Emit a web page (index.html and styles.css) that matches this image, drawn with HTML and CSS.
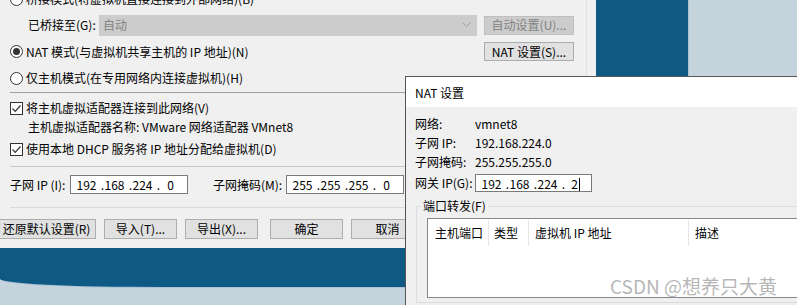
FILE: index.html
```html
<!DOCTYPE html>
<html lang="zh-CN">
<head>
<meta charset="utf-8">
<title>虚拟网络编辑器 - NAT 设置</title>
<link rel="stylesheet" href="styles.css">
</head>
<body>
<div class="desktop">
  <div class="vmware-bg"></div>

  <div class="win vne">
    <div class="vne-body">
      <div class="row row-a">
        <span class="radio"></span><span class="rtext">桥接模式(将虚拟机直接连接到外部网络)(B)</span>
      </div>
      <div class="row row-b">
        <span class="lbl-bridge">已桥接至(G):</span>
        <div class="combo">
          <span>自动</span>
          <svg class="chev" width="9" height="6" viewBox="0 0 9 6"><polyline points="0.5,0.5 4.5,4.5 8.5,0.5" fill="none" stroke="#a0a0a0" stroke-width="1"/></svg>
        </div>
        <button class="btn btn-side disabled">自动设置(U)...</button>
      </div>
      <div class="row row-c">
        <span class="radio checked"></span><span class="rtext">NAT 模式(与虚拟机共享主机的 IP 地址)(N)</span>
        <button class="btn btn-side">NAT 设置(S)...</button>
      </div>
      <div class="row row-d">
        <span class="radio"></span><span class="rtext">仅主机模式(在专用网络内连接虚拟机)(H)</span>
      </div>
      <div class="sep sep1"></div>
      <div class="row row-e">
        <span class="check"><svg width="11" height="11" viewBox="0 0 11 11"><polyline points="1.5,5.5 4.2,8.3 9.5,2.5" fill="none" stroke="#333" stroke-width="1.2"/></svg></span>
        <span class="rtext">将主机虚拟适配器连接到此网络(V)</span>
      </div>
      <div class="row row-f">主机虚拟适配器名称: VMware 网络适配器 VMnet8</div>
      <div class="row row-g">
        <span class="check"><svg width="11" height="11" viewBox="0 0 11 11"><polyline points="1.5,5.5 4.2,8.3 9.5,2.5" fill="none" stroke="#333" stroke-width="1.2"/></svg></span>
        <span class="rtext">使用本地 DHCP 服务将 IP 地址分配给虚拟机(D)</span>
      </div>
      <div class="sep sep2"></div>
      <div class="row row-h">
        <span class="lbl-ip">子网 IP (I):</span>
        <div class="ipbox">
          <span class="oct">192</span><span class="dot">.</span><span class="oct">168</span><span class="dot">.</span><span class="oct">224</span><span class="dot">.</span><span class="oct">0</span>
        </div>
        <span class="lbl-mask">子网掩码(M):</span>
        <div class="ipbox">
          <span class="oct">255</span><span class="dot">.</span><span class="oct">255</span><span class="dot">.</span><span class="oct">255</span><span class="dot">.</span><span class="oct">0</span>
        </div>
      </div>
      <div class="sep sep3"></div>
      <div class="row row-i">
        <button class="btn btn-reset">还原默认设置(R)</button>
        <button class="btn btn-std">导入(T)...</button>
        <button class="btn btn-std">导出(X)...</button>
        <button class="btn btn-std btn-ok">确定</button>
        <button class="btn btn-std">取消</button>
      </div>
    </div>
  </div>

  <div class="win nat">
    <div class="nat-title">NAT 设置</div>
    <div class="nat-body">
      <div class="kv kv1"><span class="k">网络:</span><span>vmnet8</span></div>
      <div class="kv kv2"><span class="k">子网 IP:</span><span>192.168.224.0</span></div>
      <div class="kv kv3"><span class="k">子网掩码:</span><span>255.255.255.0</span></div>
      <div class="kv kv4"><span class="k">网关 IP(G):</span>
        <div class="ipbox gw">
          <span class="oct">192</span><span class="dot">.</span><span class="oct">168</span><span class="dot">.</span><span class="oct">224</span><span class="dot">.</span><span class="oct">2<span class="caret"></span></span>
        </div>
      </div>
      <fieldset class="group">
        <legend>端口转发(F)</legend>
        <div class="list">
          <div class="list-head">
            <div class="col c1">主机端口</div>
            <div class="col c2">类型</div>
            <div class="col c3">虚拟机 IP 地址</div>
            <div class="col c4">描述</div>
          </div>
        </div>
      </fieldset>
    </div>
  </div>

  <div class="watermark">CSDN @想养只大黄</div>
</div>
</body>
</html>
```

FILE: styles.css
```css
* { box-sizing: border-box; }
html, body { margin: 0; padding: 0; }
body {
  width: 797px;
  height: 305px;
  overflow: hidden;
  font-family: "Noto Sans CJK SC", "Noto Sans", sans-serif;
  font-size: 12px;
  color: #000;
}
.desktop {
  position: relative;
  width: 797px;
  height: 305px;
  background: #c5d3dc;
  overflow: hidden;
}
.vmware-bg {
  width: 688px;
  height: 287px;
  background: #0e5a85;
  border-bottom-left-radius: 160px 8px;
  box-shadow: 1px 1px 0 #a9c3d5;
}
.win { position: absolute; }

/* ---- virtual network editor ---- */
.vne {
  left: 0;
  top: 0;
  width: 596px;
  height: 248px;
  background: #f0f0f0;
}
.vne-body {
  width: 587px;
  height: 100%;
  border-right: 1px solid #e2e2e2;
  padding: 0 12px 0 10px;
  display: flex;
  flex-direction: column;
}
.row {
  display: flex;
  align-items: center;
  flex: none;
  white-space: nowrap;
  line-height: 16px;
}
.row-a { height: 26px; margin-top: -14px; }
.row-b { height: 26px; padding-left: 18px; }
.row-c { height: 27px; }
.row-d { height: 26px; }
.row-e { height: 22px; margin-top: 4px; }
.row-f { height: 16px; padding-left: 18px; }
.row-g { height: 22px; margin-top: 3px; }
.row-h { height: 19px; margin-top: 8px; }
.row-i { height: 20px; margin-top: 11px; }

.sep { flex: none; height: 1px; }
.sep1 { margin-top: 1px; background: #a0a0a0; }
.sep2 { margin-top: 6px; background: #c8c8c8; }
.sep3 { margin-top: 13px; background: #dadada; }

.radio {
  width: 13px;
  height: 13px;
  border: 1px solid #333;
  border-radius: 50%;
  background: #fff;
  flex: none;
  display: flex;
  align-items: center;
  justify-content: center;
}
.radio.checked::after {
  content: "";
  width: 7px;
  height: 7px;
  border-radius: 50%;
  background: #333;
}
.check {
  width: 13px;
  height: 13px;
  border: 1px solid #333;
  background: #fff;
  flex: none;
  display: flex;
  align-items: center;
  justify-content: center;
}
.check svg { display: block; }
.rtext { margin-left: 3px; }

.lbl-bridge { width: 71px; flex: none; }
.combo {
  width: 378px;
  height: 21px;
  background: #cccccc;
  border: 1px solid #cccccc;
  color: #838383;
  display: flex;
  align-items: center;
  justify-content: space-between;
  padding: 0 5px 0 3px;
}
.chev { display: block; }

.btn {
  font-family: inherit;
  font-size: 12px;
  color: #000;
  background: #e1e1e1;
  border: 1px solid #adadad;
  padding: 0;
  margin: 0;
  height: 20px;
  line-height: 16px;
  text-align: center;
  white-space: nowrap;
  flex: none;
}
.btn.disabled {
  background: #cccccc;
  border-color: #bfbfbf;
  color: #838383;
}
.btn-side { width: 90px; height: 19px; margin-left: auto; }
.btn-reset { width: 99px; margin-left: -13px; }
.btn-std { width: 73px; margin-left: 8px; }
.btn-ok { margin-left: 12px; }

.lbl-ip { width: 60px; flex: none; }
.lbl-mask { width: 73px; margin-left: 25px; flex: none; }
.ipbox {
  width: 118px;
  height: 19px;
  background: #fff;
  border: 1px solid #7a7a7a;
  display: flex;
  align-items: center;
  padding-left: 4px;
  flex: none;
  line-height: 15px;
}
.oct { width: 23px; text-align: center; flex: none; white-space: nowrap; }
.dot { width: 6px; text-align: right; flex: none; margin-right: -1px; }

/* ---- NAT dialog ---- */
.nat {
  left: 405px;
  top: 76px;
  width: 400px;
  height: 240px;
  border: 1px solid #555;
  background: #f0f0f0;
}
.nat-title {
  height: 30px;
  background: #fff;
  padding-left: 9px;
  display: flex;
  align-items: center;
}
.nat-body {
  padding-left: 9px;
  display: flex;
  flex-direction: column;
}
.kv {
  display: flex;
  align-items: center;
  white-space: nowrap;
  line-height: 16px;
  flex: none;
}
.kv .k { width: 60px; flex: none; }
.kv1 { height: 18px; margin-top: 8px; }
.kv2 { height: 19px; }
.kv3 { height: 19px; }
.kv4 { height: 18px; margin-top: 3px; }
.ipbox.gw { width: 117px; height: 18px; }
.caret {
  display: inline-block;
  width: 1px;
  height: 13px;
  background: #000;
  margin-left: 1px;
  vertical-align: -2px;
}

.group {
  margin: 6px 0 0 1px;
  padding: 0 0 4px 10px;
  border: 1px solid #dcdcdc;
  border-right: none;
  width: 390px;
  min-width: 0;
}
.group legend {
  margin-left: -6px;
  padding: 0 2px;
  line-height: 16px;
  font-size: 12px;
}
.list {
  margin-top: 4px;
  height: 80px;
  width: 380px;
  background: #fff;
  border: 1px solid #828790;
}
.list-head {
  display: flex;
  margin-top: 1px;
  height: 26px;
}
.col {
  height: 26px;
  line-height: 26px;
  border-right: 1px solid #e5e5e5;
  white-space: nowrap;
  flex: none;
}
.c1 { width: 61px; padding-left: 7px; }
.c2 { width: 40px; padding-left: 5px; }
.c3 { width: 160px; padding-left: 6px; }
.c4 { width: 110px; padding-left: 6px; border-right: none; }

.watermark {
  position: absolute;
  left: 610px;
  top: 274px;
  font-size: 19px;
  line-height: 24px;
  color: rgba(150, 150, 150, 0.7);
  white-space: nowrap;
}
```
